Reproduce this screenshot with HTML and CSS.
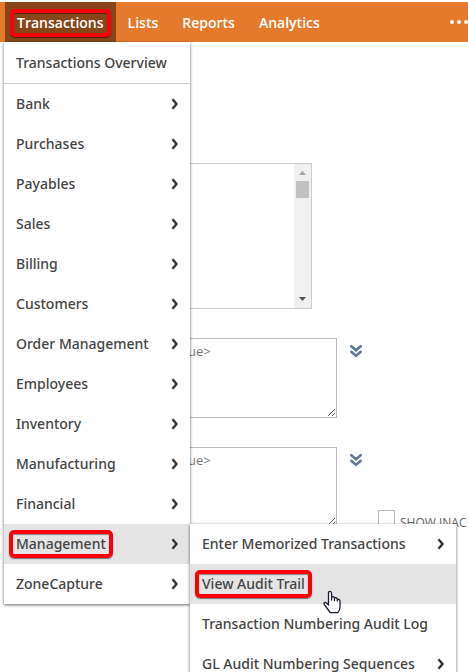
FILE: index.html
```html
<!DOCTYPE html>
<html lang="en">
<head>
<meta charset="utf-8">
<meta name="viewport" content="width=device-width, initial-scale=1">
<title>Transactions</title>
<link rel="stylesheet" href="styles.css">
</head>
<body>
<svg class="defs" aria-hidden="true">
  <symbol id="chevron" viewBox="0 0 8 12"><path d="M1.5 1.2 5.5 6 1.5 10.8" fill="none" stroke="#333" stroke-width="2.4"/></symbol>
  <symbol id="double-chevron" viewBox="0 0 12 13"><path d="M1.3 1.3 6 5.3 10.7 1.3M1.3 6.8 6 10.8 10.7 6.8" fill="none" stroke="#607799" stroke-width="2.6" stroke-linecap="round"/></symbol>
</svg>
<header class="topbar">
  <nav class="tabs">
    <div class="tab-item">
      <a class="tab active" href="#"><span class="marked">Transactions</span></a>
      <ul class="menu">
        <li class="overview"><a href="#">Transactions Overview</a></li>
        <li><a href="#">Bank<svg class="chevron"><use href="#chevron"/></svg></a></li>
        <li><a href="#">Purchases<svg class="chevron"><use href="#chevron"/></svg></a></li>
        <li><a href="#">Payables<svg class="chevron"><use href="#chevron"/></svg></a></li>
        <li><a href="#">Sales<svg class="chevron"><use href="#chevron"/></svg></a></li>
        <li><a href="#">Billing<svg class="chevron"><use href="#chevron"/></svg></a></li>
        <li><a href="#">Customers<svg class="chevron"><use href="#chevron"/></svg></a></li>
        <li><a href="#">Order Management<svg class="chevron"><use href="#chevron"/></svg></a></li>
        <li><a href="#">Employees<svg class="chevron"><use href="#chevron"/></svg></a></li>
        <li><a href="#">Inventory<svg class="chevron"><use href="#chevron"/></svg></a></li>
        <li><a href="#">Manufacturing<svg class="chevron"><use href="#chevron"/></svg></a></li>
        <li><a href="#">Financial<svg class="chevron"><use href="#chevron"/></svg></a></li>
        <li class="open">
          <a class="selected" href="#"><span class="marked">Management</span><svg class="chevron"><use href="#chevron"/></svg></a>
          <ul class="menu submenu">
            <li><a href="#">Enter Memorized Transactions<svg class="chevron"><use href="#chevron"/></svg></a></li>
            <li class="open"><a class="selected" href="#"><span class="marked">View Audit Trail</span></a>
              <svg class="pointer" viewBox="0 0 18 24" aria-hidden="true"><path d="M5.5 15V3.2Q5.5 1.3 7 1.3T8.6 3.2V10 7.8Q8.9 6.6 10 6.7T11.5 8.2V10.5 8.5Q12 7.3 13 7.6T14.3 9.2V11 9.8Q14.8 9 15.8 9.4T17 11V17Q17 20 14.8 22.7H7.2Q5.8 20.5 3.5 17.5L1.2 14.3Q.6 13.2 1.6 12.6T3.5 13Z" fill="#fff" stroke="#1b1b35" stroke-width="1.3" stroke-linejoin="round"/></svg>
            </li>
            <li><a href="#">Transaction Numbering Audit Log</a></li>
            <li><a href="#">GL Audit Numbering Sequences<svg class="chevron"><use href="#chevron"/></svg></a></li>
          </ul>
        </li>
        <li><a href="#">ZoneCapture<svg class="chevron"><use href="#chevron"/></svg></a></li>
      </ul>
    </div>
    <a class="tab" href="#">Lists</a>
    <a class="tab" href="#">Reports</a>
    <a class="tab" href="#">Analytics</a>
  </nav>
  <button class="more" type="button" aria-label="More"><svg viewBox="0 0 18 4"><g fill="#fff"><circle cx="2" cy="2" r="2"/><circle cx="9" cy="2" r="2"/><circle cx="16" cy="2" r="2"/></g></svg></button>
</header>
<main class="filters">
  <div class="listbox" role="listbox" aria-label="Type">
    <svg class="scroll" viewBox="0 0 17 144"><path fill="#f0f0f0" d="M0 0h17v144H0z"/><path fill="#a3a3a3" d="M5 11h7L8.5 7z"/><path fill="#c1c1c1" d="M2 17h13v17H2z"/><path fill="#505050" d="M5 133h7l-3.5 4z"/></svg>
  </div>
  <div class="row">
    <textarea class="entry" aria-label="First filter">ue&gt;</textarea>
    <button class="expand" type="button" aria-label="Select multiple"><svg><use href="#double-chevron"/></svg></button>
  </div>
  <div class="row">
    <textarea class="entry" aria-label="Second filter">ue&gt;</textarea>
    <div class="side">
      <button class="expand" type="button" aria-label="Select multiple"><svg><use href="#double-chevron"/></svg></button>
      <label class="check"><input type="checkbox">SHOW INAC</label>
    </div>
  </div>
</main>
</body>
</html>
```
FILE: styles.css
```css
* {
  box-sizing: border-box;
}

body {
  margin: 0;
  min-height: 100vh;
  overflow: hidden;
  background: #fff;
  color: #444;
  font: 500 14px/20px "Open Sans", "Noto Sans", sans-serif;
}

a {
  color: inherit;
  text-decoration: none;
}

ul {
  margin: 0;
  padding: 0;
  list-style: none;
}

button {
  padding: 0;
  border: 0;
  background: none;
}

svg {
  display: block;
}

.defs {
  position: absolute;
  width: 0;
  height: 0;
}

.topbar {
  display: flex;
  justify-content: space-between;
  height: 40px;
  margin-top: 2px;
  padding-left: 5px;
  background: #e57a2c;
}

.tabs {
  display: flex;
}

.tab-item {
  position: relative;
}

.tab {
  display: flex;
  align-items: center;
  height: 40px;
  padding: 2px 12px 0;
  color: #fff;
  font-weight: 600;
}

.tab.active {
  background: #87451a;
}

.more svg {
  width: 18px;
  height: 4px;
}

/* Red highlight drawn around a label */
.marked {
  position: relative;
}

.marked::after {
  content: "";
  position: absolute;
  inset: -4px -7px;
  border: 4px solid #f9000b;
  border-radius: 5px;
  box-shadow: 0 1px 1px rgba(0, 0, 0, 0.5), inset 0 1px 1px rgba(0, 0, 0, 0.4);
}

.menu {
  position: absolute;
  z-index: 1;
  top: 40px;
  left: -1px;
  width: 186px;
  background: #fff;
  box-shadow: 0 1px 3px rgba(0, 0, 0, 0.6);
  font-family: "Noto Sans", "Open Sans", sans-serif;
}

.menu a {
  display: flex;
  align-items: center;
  justify-content: space-between;
  height: 40px;
  padding: 0 11px 0 12px;
  white-space: nowrap;
}

.overview {
  padding-top: 1px;
  border-bottom: 1px solid #ccc;
}

.open {
  position: relative;
}

.menu .selected {
  background: #e4e4e4;
}

.menu .submenu {
  top: 0;
  left: 186px;
  width: 266px;
}

.chevron {
  width: 8px;
  height: 12px;
}

.pointer {
  position: absolute;
  top: 26px;
  left: 133px;
  width: 18px;
  height: 24px;
}

.filters {
  display: flex;
  flex-direction: column;
  align-items: flex-start;
  gap: 29px;
  padding: 121px 0 0 16px;
}

.listbox {
  display: flex;
  justify-content: flex-end;
  width: 296px;
  height: 146px;
  border: 1px solid #ccc;
}

.scroll {
  width: 17px;
  height: 144px;
}

.row {
  display: flex;
  gap: 13px;
}

.entry {
  width: 321px;
  height: 80px;
  padding: 3px 0 0 171px;
  border: 1px solid #bbb;
  background: #fff;
  color: #777;
  font: 400 13px/18px "Open Sans", "Noto Sans", sans-serif;
  resize: both;
}

.expand {
  align-self: flex-start;
  padding-top: 7px;
}

.expand svg {
  width: 12px;
  height: 13px;
}

.side {
  display: flex;
  flex-direction: column;
  justify-content: space-between;
}

.check {
  display: flex;
  align-items: flex-start;
  gap: 5px;
  height: 17px;
  padding-left: 28px;
  color: #666;
  font-size: 12px;
  font-weight: 400;
  line-height: 26px;
  white-space: nowrap;
}

.check input {
  width: 17px;
  height: 17px;
  margin: 0;
  border: 1px solid #bbb;
  background: #fff;
  appearance: none;
}
```
